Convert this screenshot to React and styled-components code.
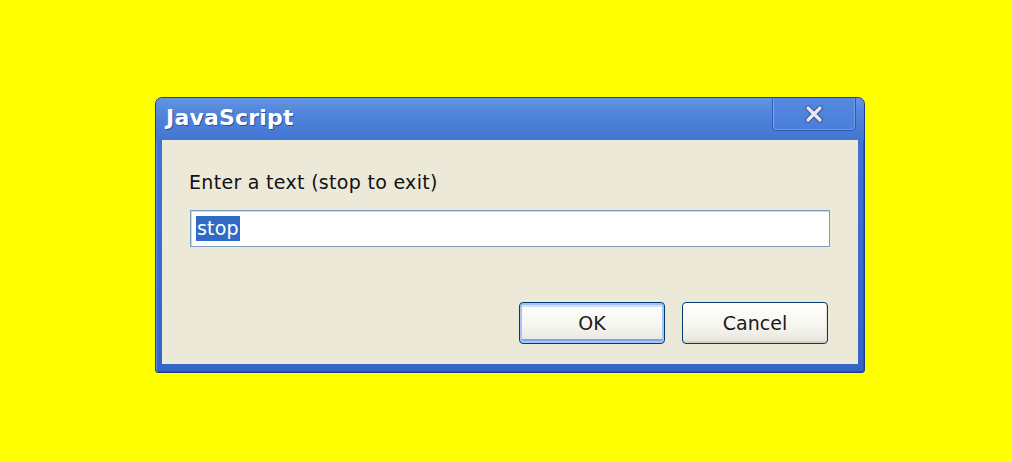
import React from 'react';
import styled, { createGlobalStyle } from 'styled-components';

const GlobalStyle = createGlobalStyle`
  html, body {
    margin: 0;
    padding: 0;
    background: #ffff00;
  }
`;

const Page = styled.div`
  width: 1012px;
  height: 462px;
  box-sizing: border-box;
  padding: 97px 0 0 155px;
  background: #ffff00;
  font-family: 'DejaVu Sans', Verdana, sans-serif;
`;

const Frame = styled.div`
  width: 710px;
  height: 276px;
  box-sizing: border-box;
  display: flex;
  flex-direction: column;
  padding: 0 6px 8px 6px;
  border: 1px solid #1f3f8f;
  border-radius: 7px 7px 3px 3px;
  background: linear-gradient(180deg, #6a98e4 0%, #3f74d6 10%, #3a6bd0 60%, #3564c8 100%);
  box-shadow: inset 1px 0 0 #5d8ae0, inset -1px 0 0 #2a56b8, inset 0 -1px 0 #2a4fa8;
`;

const TitleBar = styled.div`
  height: 42px;
  display: flex;
  align-items: flex-start;
  justify-content: space-between;
  background: linear-gradient(180deg, #6394e2 0%, #5084da 40%, #4275d2 100%);
  margin: 0 -6px;
  padding: 0 8px 0 10px;
  border-radius: 6px 6px 0 0;
`;

const Title = styled.span`
  margin-top: 7px;
  color: #fff;
  font-weight: bold;
  font-size: 22px;
  letter-spacing: 0.2px;
  text-shadow: 1px 1px 0 #2a4f9a;
`;

const CloseButton = styled.div`
  width: 84px;
  height: 33px;
  box-sizing: border-box;
  display: flex;
  align-items: center;
  justify-content: center;
  border: 1px solid #2f5ab5;
  border-top: none;
  border-radius: 0 0 5px 5px;
  background: linear-gradient(180deg, #5488e0 0%, #4a7edb 100%);
  box-shadow: inset 1px 0 0 #7ea6ea, inset 0 -1px 0 #7099e3, inset -1px 0 0 #7099e3;
`;

const Body = styled.div`
  flex: 1;
  display: flex;
  flex-direction: column;
  background: #ece9d8;
  padding: 30px 28px 20px 27px;
`;

const Label = styled.div`
  font-size: 19px;
  color: #111;
  letter-spacing: 0.3px;
  line-height: 24px;
`;

const Input = styled.div`
  margin: 16px 0 0 1px;
  height: 37px;
  box-sizing: border-box;
  display: flex;
  align-items: center;
  padding-left: 5px;
  background: #fff;
  border: 1px solid #7f9db9;
  box-shadow: inset 1px 1px 0 #c9d5ec;
`;

const Selected = styled.span`
  background: #316ac5;
  color: #fff;
  font-size: 19px;
  line-height: 25px;
  letter-spacing: 0.2px;
  padding: 0 1px;
`;

const Buttons = styled.div`
  margin-top: auto;
  display: flex;
  justify-content: flex-end;
  gap: 17px;
  padding-right: 2px;
`;

const Button = styled.button`
  width: 146px;
  height: 42px;
  box-sizing: border-box;
  font-family: inherit;
  font-size: 19px;
  color: #1a1a1a;
  border: 1px solid #003c74;
  border-radius: 4px;
  background: linear-gradient(180deg, #ffffff 0%, #f6f5f0 55%, #e7e6dd 100%);
  box-shadow: ${p =>
    p.$focused
      ? 'inset 0 0 0 2px #a8c4f2, inset 0 -2px 0 2px #7fa3e8, inset 0 2px 0 2px #cfe0fb'
      : 'inset 0 -2px 0 #d6d0c5, inset -1px 0 0 #e2ded3'};
  padding: 0;
`;

function CloseIcon() {
  return (
    <svg width="24" height="20" viewBox="0 0 24 20">
      <path d="M6 4 L18 16 M18 4 L6 16" stroke="#3d5590" strokeWidth="5.4" strokeLinecap="round" />
      <path d="M6 4 L18 16 M18 4 L6 16" stroke="#e4e9f6" strokeWidth="3.2" strokeLinecap="round" />
    </svg>
  );
}

export default function App() {
  return (
    <Page>
      <GlobalStyle />
      <Frame>
        <TitleBar>
          <Title>JavaScript</Title>
          <CloseButton>
            <CloseIcon />
          </CloseButton>
        </TitleBar>
        <Body>
          <Label>Enter a text (stop to exit)</Label>
          <Input>
            <Selected>stop</Selected>
          </Input>
          <Buttons>
            <Button $focused>OK</Button>
            <Button>Cancel</Button>
          </Buttons>
        </Body>
      </Frame>
    </Page>
  );
}
